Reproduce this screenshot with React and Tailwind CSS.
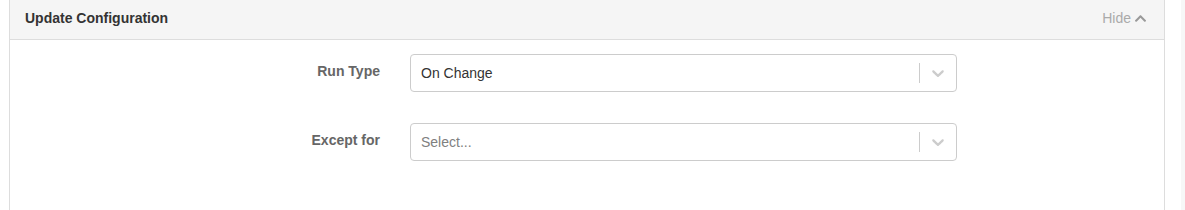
import React from "react";

const ChevronDown = () => (
  <svg viewBox="0 0 20 20" width="20" height="20" className="fill-[#cccccc]">
    <path d="M4.516 7.548c0.436-0.446 1.043-0.481 1.576 0l3.908 3.747 3.908-3.747c0.533-0.481 1.141-0.446 1.574 0 0.436 0.445 0.408 1.197 0 1.615-0.406 0.418-4.695 4.502-4.695 4.502-0.217 0.223-0.502 0.335-0.787 0.335s-0.57-0.112-0.789-0.335c0 0-4.287-4.084-4.695-4.502s-0.436-1.17 0-1.615z" />
  </svg>
);

const SelectBox = ({ value, placeholder }) => (
  <div className="flex h-[38px] w-[547px] items-center rounded-[4px] border border-[#cccccc] bg-white">
    <div className="flex-1 px-[10px] text-[14px]">
      {value ? (
        <span className="text-[#333333]">{value}</span>
      ) : (
        <span className="text-[#808080]">{placeholder}</span>
      )}
    </div>
    <span className="my-2 h-5 w-px self-center bg-[#cccccc]" />
    <div className="p-2">
      <ChevronDown />
    </div>
  </div>
);

const Row = ({ label, children }) => (
  <div className="flex items-center">
    <label className="w-[370px] pb-1 text-right text-[14px] font-bold text-[#666666]">
      {label}
    </label>
    <div className="ml-[30px]">{children}</div>
  </div>
);

export default function App() {
  return (
    <div className="flex h-[210px] overflow-hidden bg-white font-['Liberation_Sans',Arial,sans-serif]">
      <div className="ml-[9px] h-[240px] w-[1156px] border-x border-[#dddddd]">
        <div className="flex h-10 items-center justify-between border-b border-[#dddddd] bg-[#f5f5f5] pl-[15px] pr-[17px]">
          <h3 className="pb-[2px] text-[14px] font-bold text-[#333333]">Update Configuration</h3>
          <button className="flex items-center gap-[3px] pb-[2px] text-[14px] text-[#aaaaaa]">
            Hide
            <svg viewBox="0 0 448 512" width="13" height="13" className="fill-[#999999]">
              <path d="M240.971 130.524l194.343 194.343c9.373 9.373 9.373 24.569 0 33.941l-22.667 22.667c-9.357 9.357-24.522 9.375-33.901.04L224 227.495 69.255 381.516c-9.379 9.335-24.544 9.317-33.901-.04l-22.667-22.667c-9.373-9.373-9.373-24.569 0-33.941L207.03 130.525c9.372-9.373 24.568-9.373 33.941-.001z" />
            </svg>
          </button>
        </div>
        <div className="flex flex-col gap-[31px] pt-[14px]">
          <Row label="Run Type">
            <SelectBox value="On Change" />
          </Row>
          <Row label="Except for">
            <SelectBox placeholder="Select..." />
          </Row>
        </div>
      </div>
      <div className="ml-auto w-[4px] bg-[#f7f7f7]" />
    </div>
  );
}
